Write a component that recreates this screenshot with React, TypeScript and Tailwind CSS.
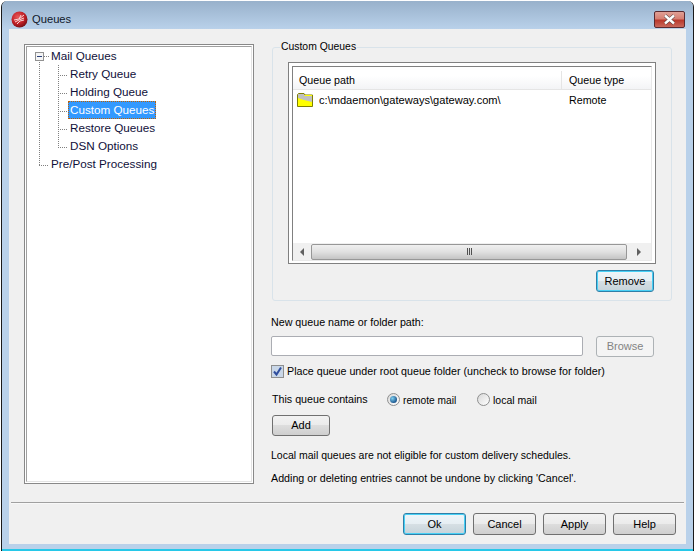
const font = { fontFamily: '"Liberation Sans", Arial, sans-serif' };

function AeroButton({ label, primary, disabled, className }: { label: string; primary?: boolean; disabled?: boolean; className: string }) {
  let look = "border-[#707070] bg-[linear-gradient(#f2f2f2_0%,#ebebeb_50%,#dddddd_50%,#cfcfcf_100%)] text-black";
  if (primary) look = "border-[#2f7fa8] bg-[linear-gradient(#eef5f9_0%,#e6eef3_50%,#d6dfe4_50%,#c6d3da_100%)] text-black shadow-[inset_0_0_0_1px_#48d0f5]";
  if (disabled) look = "border-[#adb2b5] bg-[#f4f4f4] text-[#838383]";
  return (
    <button type="button" className={`flex items-center justify-center rounded-[3px] border text-[11px] leading-none ${look} ${className}`}>
      {label}
    </button>
  );
}

function AppLogo() {
  return (
    <svg width="17" height="17" viewBox="0 0 17 17" className="shrink-0">
      <defs>
        <radialGradient id="ball" cx="40%" cy="35%" r="70%">
          <stop offset="0" stopColor="#e85a5a" />
          <stop offset="0.6" stopColor="#c01f26" />
          <stop offset="1" stopColor="#6d0d12" />
        </radialGradient>
      </defs>
      <circle cx="8.5" cy="8.5" r="8" fill="url(#ball)" />
      <path d="M3 9 L8 8 L13 4 M4 11 L8 9 L13 7 M6 13 L9 10 L13 9 M8 8 L10 4" stroke="#f7d6d6" strokeWidth="1" fill="none" />
    </svg>
  );
}

function CloseButton() {
  return (
    <div className="flex h-[17px] w-[31px] items-center justify-center rounded-[2px] border border-[#5a2a30] bg-[linear-gradient(#e0a096_0%,#d67f72_45%,#b9392d_55%,#c9685c_100%)]">
      <svg width="13" height="11" viewBox="0 0 13 11">
        <path d="M2 1.5 L11 9.5 M11 1.5 L2 9.5" stroke="#4a3a3a" strokeWidth="3.6" />
        <path d="M2 1.5 L11 9.5 M11 1.5 L2 9.5" stroke="#ffffff" strokeWidth="2.4" />
      </svg>
    </div>
  );
}

function FolderIcon() {
  return (
    <svg width="16" height="14" viewBox="0 0 16 14" className="shrink-0">
      <path d="M0.5 13.5 V1.5 L1.5 0.5 H7 L8 2 H15.5 V13.5 Z" fill="#c0c0c0" stroke="#808000" />
      <path d="M1 3 H7 L8 2 H15 V3 H1 Z" fill="#ffff00" />
      <path d="M1 5 L7 7 L15 9 V13 H1 Z" fill="#ffff00" />
    </svg>
  );
}

function TreeLines() {
  return (
    <svg width="40" height="130" viewBox="0 0 40 130" className="absolute left-[9px] top-[6px]">
      <g stroke="#808080" strokeDasharray="1 1" strokeWidth="1" fill="none">
        <path d="M5.5 11 V114" />
        <path d="M10 5.5 H15" />
        <path d="M5 114.5 H15" />
        <path d="M24.5 14 V96" />
        <path d="M24 24.5 H33" />
        <path d="M24 42.5 H33" />
        <path d="M24 60.5 H33" />
        <path d="M24 78.5 H33" />
        <path d="M24 96.5 H33" />
      </g>
      <rect x="1.5" y="1.5" width="8" height="8" fill="#f4f4f4" stroke="#919191" />
      <path d="M3 5.5 H8" stroke="#2a3f7a" />
    </svg>
  );
}

function TreeItem({ label, indent, selected }: { label: string; indent: string; selected?: boolean }) {
  return (
    <div className={`flex h-[18px] items-center ${indent}`}>
      <span
        className={
          selected
            ? "flex h-[18px] items-center border border-dotted border-[#c06000] bg-[#3399ff] px-[1px] text-white"
            : "px-[2px] text-[#10103a]"
        }
      >
        {label}
      </span>
    </div>
  );
}

function TreePanel() {
  return (
    <div className="relative mt-[4px] h-[440px] w-[230px] shrink-0 border border-[#888888] bg-white p-[1px] text-[11.7px]">
      <div className="h-full border border-[#e3e3e3] border-l-[#a0a0a0] border-t-[#a0a0a0]">
        <TreeLines />
        <TreeItem label="Mail Queues" indent="pl-[22px]" />
        <TreeItem label="Retry Queue" indent="pl-[41px]" />
        <TreeItem label="Holding Queue" indent="pl-[41px]" />
        <TreeItem label="Custom Queues" indent="pl-[41px]" selected />
        <TreeItem label="Restore Queues" indent="pl-[41px]" />
        <TreeItem label="DSN Options" indent="pl-[41px]" />
        <TreeItem label="Pre/Post Processing" indent="pl-[22px]" />
      </div>
    </div>
  );
}

function HScrollBar() {
  return (
    <div className="mt-auto flex h-[17px] items-center bg-[#f0f0f0]">
      <div className="flex w-[18px] justify-center">
        <div className="h-0 w-0 border-y-[4px] border-r-[4px] border-y-transparent border-r-[#606060]" />
      </div>
      <div className="flex h-[16px] w-[316px] items-center justify-center rounded-[2px] border border-[#979797] bg-[linear-gradient(#f0f0f0,#e0e0e0_50%,#c4c4c4)]">
        <div className="flex gap-[1px]">
          <div className="h-[7px] w-[1px] bg-[#505050]" />
          <div className="h-[7px] w-[1px] bg-[#505050]" />
          <div className="h-[7px] w-[1px] bg-[#505050]" />
        </div>
      </div>
      <div className="flex flex-1 justify-center">
        <div className="h-0 w-0 border-y-[4px] border-l-[4px] border-y-transparent border-l-[#606060]" />
      </div>
    </div>
  );
}

function QueueList() {
  return (
    <div className="ml-[15px] mt-[8px] flex h-[202px] w-[368px] flex-col border border-[#808080] bg-white px-[3px] pb-[2px] pt-[3px]">
      <div className="flex h-full flex-col border border-b-[#e8e8e8] border-l-[#808080] border-r-[#e8e8e8] border-t-[#808080]">
        <div className="flex h-[23px] border-b border-[#e5e5e5] bg-[linear-gradient(#ffffff_40%,#f3f4f6)] pt-[4px]">
          <div className="flex w-[269px] items-center border-r border-[#e5e5e5] pl-[6px]">Queue path</div>
          <div className="flex items-center pl-[7px]">Queue type</div>
        </div>
        <div className="flex h-[21px] items-center">
          <div className="flex w-[269px] items-center gap-[6px] pl-[4px]">
            <FolderIcon />
            <span className="text-[11.1px]">c:\mdaemon\gateways\gateway.com\</span>
          </div>
          <div className="pl-[7px]">Remote</div>
        </div>
        <HScrollBar />
      </div>
    </div>
  );
}

function RadioDot({ checked }: { checked?: boolean }) {
  return (
    <span className="flex h-[13px] w-[13px] items-center justify-center rounded-full border border-[#8e8f8f] bg-[linear-gradient(135deg,#d8d8d8,#ffffff)]">
      {checked ? <span className="h-[7px] w-[7px] rounded-full bg-[radial-gradient(circle_at_35%_35%,#7fd0f0,#16508a_75%)]" /> : null}
    </span>
  );
}

function RightColumn() {
  return (
    <div className="ml-[17px] flex w-[402px] flex-col text-[10.7px]">
      <fieldset className="ml-[1px] h-[261px] w-[400px] rounded-[3px] border border-[#d9e3ea]">
        <legend className="ml-[7px] bg-[#f0f0f0] px-[1px] text-[10.4px] leading-[14px]">Custom Queues</legend>
        <QueueList />
        <div className="mt-[6px] flex justify-end pr-[17px]">
          <AeroButton label="Remove" primary className="h-[22px] w-[58px]" />
        </div>
      </fieldset>
      <div className="mt-[14px] leading-[14px]">New queue name or folder path:</div>
      <div className="mt-[7px] flex items-start">
        <div className="h-[20px] w-[312px] rounded-[2px] border border-[#abadb3] bg-white" />
        <AeroButton label="Browse" disabled className="ml-[13px] h-[21px] w-[58px]" />
      </div>
      <div className="mt-[7px] flex h-[14px] items-center gap-[3px]">
        <span className="flex h-[13px] w-[13px] items-center justify-center border border-[#8e8f8f] bg-[#c9d7e8]">
          <svg width="11" height="11" viewBox="0 0 11 11">
            <path d="M2 5.5 L4.5 8.5 L9 1.5" stroke="#2f4e9e" strokeWidth="2" fill="none" />
          </svg>
        </span>
        <span>Place queue under root queue folder (uncheck to browse for folder)</span>
      </div>
      <div className="mt-[14px] flex h-[14px] items-center pl-[1px]">
        <span className="w-[115px]">This queue contains</span>
        <RadioDot checked />
        <span className="ml-[3px] mt-[3px] w-[74px] text-[10.2px]">remote mail</span>
        <RadioDot />
        <span className="ml-[3px] mt-[3px] text-[10.5px]">local mail</span>
      </div>
      <AeroButton label="Add" className="ml-[1px] mt-[9px] h-[21px] w-[58px]" />
      <div className="mt-[12px] text-[10.5px] leading-[14px]">Local mail queues are not eligible for custom delivery schedules.</div>
      <div className="mt-[9px] leading-[14px]">Adding or deleting entries cannot be undone by clicking 'Cancel'.</div>
    </div>
  );
}

export default function App() {
  return (
    <div className="h-[551px] w-[695px] overflow-hidden border-x border-t border-white bg-white">
      <div style={font} className="flex h-full flex-col overflow-hidden rounded-t-[6px] border-x border-x-[#1a1a1a] bg-[#b9d1ea] text-[12px] text-black">
        <div className="flex h-[28px] shrink-0 items-center justify-between bg-[linear-gradient(#98b1cb,#b9d1ea)] pl-[9px] pr-[8px] pt-[8px]">
          <div className="flex items-center gap-[4px]">
            <AppLogo />
            <span className="text-[11.2px] text-[#10182a]">Queues</span>
          </div>
          <CloseButton />
        </div>
        <div className="mx-[7px] flex h-[515px] shrink-0 flex-col bg-[#f0f0f0]">
          <div className="flex h-[473px] pl-[15px] pt-[11px]">
            <TreePanel />
            <RightColumn />
          </div>
          <div className="mx-[2px] h-[2px] border-t border-[#a0a0a0] bg-[#f8f8f8]" />
          <div className="flex justify-end gap-[7px] pr-[10px] pt-[9px]">
            <AeroButton label="Ok" primary className="h-[22px] w-[63px]" />
            <AeroButton label="Cancel" className="h-[22px] w-[63px]" />
            <AeroButton label="Apply" className="h-[22px] w-[63px]" />
            <AeroButton label="Help" className="h-[22px] w-[63px]" />
          </div>
        </div>
        <div className="mt-auto h-[2px] bg-[#27c8e8]" />
      </div>
    </div>
  );
}
